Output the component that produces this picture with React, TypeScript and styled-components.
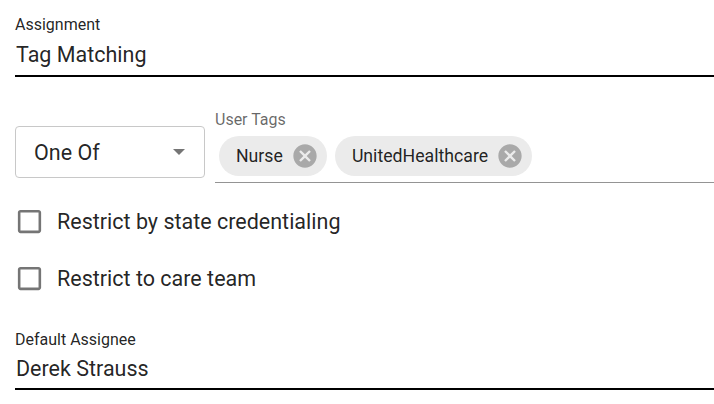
import React from 'react';
import styled, { createGlobalStyle } from 'styled-components';

const GlobalStyle = createGlobalStyle`
  html, body {
    margin: 0;
    padding: 0;
    background: #ffffff;
  }
  body {
    font-family: Roboto, "Liberation Sans", Arial, sans-serif;
    color: rgba(0, 0, 0, 0.87);
  }
`;

const Form = styled.div`
  width: 714px;
  padding-left: 15px;
  box-sizing: border-box;
  display: flex;
  flex-direction: column;
`;

const Field = styled.div<{ top: number; gap: number; bottom: number }>`
  margin-top: ${p => p.top}px;
  padding-bottom: ${p => p.bottom}px;
  border-bottom: 2px solid #000;
  display: flex;
  flex-direction: column;
  gap: ${p => p.gap}px;
`;

const Label = styled.div<{ muted?: boolean }>`
  font-size: 16px;
  line-height: 16px;
  color: ${p => (p.muted ? 'rgba(0, 0, 0, 0.6)' : 'rgba(0, 0, 0, 0.87)')};
`;

const Value = styled.div`
  font-size: 21.5px;
  line-height: 24px;
  padding-left: 1px;
  color: rgba(0, 0, 0, 0.87);
`;

const FilterRow = styled.div`
  margin-top: 35px;
  display: flex;
  align-items: flex-start;
  gap: 10px;
`;

const SelectBox = styled.div`
  margin-top: 14px;
  width: 190px;
  height: 52px;
  box-sizing: border-box;
  border: 1px solid #c8c8c8;
  border-radius: 4px;
  padding: 0 19px 0 18px;
  display: flex;
  align-items: center;
  justify-content: space-between;
  font-size: 21.5px;
  color: rgba(0, 0, 0, 0.87);
`;

const TagsField = styled.div`
  flex: 1;
  display: flex;
  flex-direction: column;
  gap: 8px;
  padding-bottom: 6px;
  border-bottom: 1px solid rgba(0, 0, 0, 0.42);
`;

const ChipList = styled.div`
  display: flex;
  gap: 8px;
  padding-left: 4px;
`;

const Chip = styled.div`
  height: 40px;
  border-radius: 20px;
  background: #ebebeb;
  display: flex;
  align-items: center;
  padding: 0 8px 0 17px;
  gap: 8px;
  font-size: 17.7px;
  color: rgba(0, 0, 0, 0.87);
`;

const CheckList = styled.div`
  margin-top: 17px;
  display: flex;
  flex-direction: column;
  gap: 15px;
`;

const CheckRow = styled.label`
  height: 42px;
  display: flex;
  align-items: center;
  gap: 12px;
  font-size: 21.5px;
  color: rgba(0, 0, 0, 0.87);
`;

const BoxIcon = styled.svg`
  width: 31px;
  height: 31px;
  margin-left: -1px;
  fill: rgba(0, 0, 0, 0.54);
`;

const CancelIcon = () => (
  <svg width="28" height="28" viewBox="0 0 24 24" fill="rgba(0,0,0,0.28)">
    <path d="M12 2C6.47 2 2 6.47 2 12s4.47 10 10 10 10-4.47 10-10S17.53 2 12 2zm5 13.59L15.59 17 12 13.41 8.41 17 7 15.59 10.59 12 7 8.41 8.41 7 12 10.59 15.59 7 17 8.41 13.41 12 17 15.59z" />
  </svg>
);

const ArrowIcon = () => (
  <svg width="12" height="6" viewBox="0 0 12 6">
    <polygon points="0,0 12,0 6,6" fill="rgba(0,0,0,0.54)" />
  </svg>
);

const tags = ['Nurse', 'UnitedHealthcare'];
const options = ['Restrict by state credentialing', 'Restrict to care team'];

const App: React.FC = () => (
  <>
    <GlobalStyle />
    <Form>
      <Field top={17} gap={10} bottom={8}>
        <Label>Assignment</Label>
        <Value>Tag Matching</Value>
      </Field>

      <FilterRow>
        <SelectBox>
          <span>One Of</span>
          <ArrowIcon />
        </SelectBox>
        <TagsField>
          <Label muted>User Tags</Label>
          <ChipList>
            {tags.map(tag => (
              <Chip key={tag}>
                <span>{tag}</span>
                <CancelIcon />
              </Chip>
            ))}
          </ChipList>
        </TagsField>
      </FilterRow>

      <CheckList>
        {options.map(option => (
          <CheckRow key={option}>
            <BoxIcon viewBox="0 0 24 24">
              <path d="M19 5v14H5V5h14m0-2H5c-1.1 0-2 .9-2 2v14c0 1.1.9 2 2 2h14c1.1 0 2-.9 2-2V5c0-1.1-.9-2-2-2z" />
            </BoxIcon>
            <span>{option}</span>
          </CheckRow>
        ))}
      </CheckList>

      <Field top={33} gap={9} bottom={7}>
        <Label>Default Assignee</Label>
        <Value>Derek Strauss</Value>
      </Field>
    </Form>
  </>
);

export default App;
